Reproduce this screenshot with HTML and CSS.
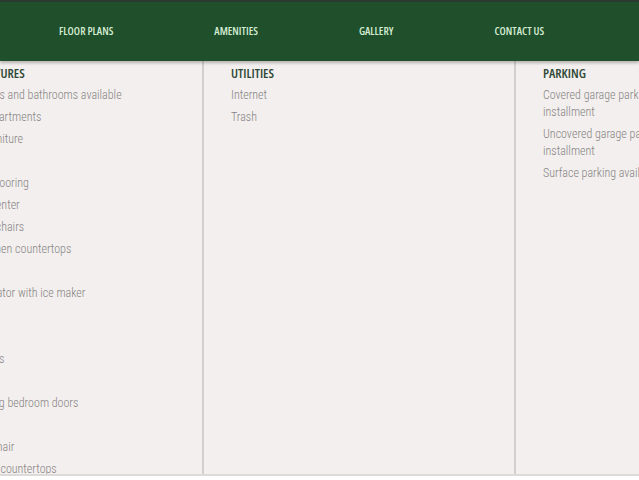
FILE: index.html
```html
<!DOCTYPE html>
<html>
<head>
<meta charset="utf-8">
<link rel="stylesheet" href="styles.css">
</head>
<body>
<header class="topbar">
  <nav class="nav">
    <a class="nav-link">FLOOR PLANS</a>
    <a class="nav-link">AMENITIES</a>
    <a class="nav-link">GALLERY</a>
    <a class="nav-link">CONTACT US</a>
  </nav>
</header>
<main class="panel">
  <section class="col">
    <h3 class="col-title">APARTMENT FEATURES</h3>
    <ul class="list">
      <li>Multiple bedrooms and bathrooms available</li>
      <li>All pet-friendly apartments</li>
      <li>All brand new furniture</li>
      <li>Balcony</li>
      <li>Hardwood-style flooring</li>
      <li>24-hour fitness center</li>
      <li>Dining table and chairs</li>
      <li>Solid granite kitchen countertops</li>
      <li>Dishwasher</li>
      <li>Stainless refrigerator with ice maker</li>
      <li>Microwave</li>
      <li>Ceiling fans</li>
      <li>Big walk-in closets</li>
      <li>Washer/Dryer</li>
      <li>Large glass sliding bedroom doors</li>
      <li>Study desk</li>
      <li>Computer desk chair</li>
      <li>Laminate kitchen countertops</li>
    </ul>
  </section>
  <section class="col">
    <h3 class="col-title">UTILITIES</h3>
    <ul class="list">
      <li>Internet</li>
      <li>Trash</li>
    </ul>
  </section>
  <section class="col col-wrap">
    <h3 class="col-title">PARKING</h3>
    <ul class="list">
      <li>Covered garage parking available for monthly installment</li>
      <li>Uncovered garage parking available for monthly installment</li>
      <li>Surface parking available</li>
    </ul>
  </section>
</main>
</body>
</html>
```
FILE: styles.css
```css
html, body {
  margin: 0;
  padding: 0;
  background: #ffffff;
  overflow: hidden;
}
body {
  width: 639px;
  height: 480px;
}
.topbar {
  height: 59px;
  background: #1f4f2b;
  border-top: 2px solid #2b3a30;
  box-shadow: 0 2px 3px rgba(0,0,0,0.25);
  position: relative;
  z-index: 2;
}
.nav {
  display: flex;
  align-items: center;
  gap: 101px;
  height: 100%;
  padding-left: 59px;
  padding-bottom: 2px;
  box-sizing: border-box;
}
.nav-link {
  color: #d4ecd2;
  font-family: "Open Sans", sans-serif;
  font-stretch: 75%;
  font-weight: 600;
  font-size: 11px;
  white-space: nowrap;
}
.panel {
  display: grid;
  grid-template-columns: 312px 312px 312px;
  margin-left: -108px;
  height: 413px;
  background: #f2efee;
  border-bottom: 2px solid #dddada;
  overflow: hidden;
}
.col {
  border-right: 2px solid #d2cfce;
  padding: 4px 30px 0 27px;
  box-sizing: border-box;
  height: 100%;
}
.col:first-child {
  padding-left: 26px;
}
.col-title {
  margin: 0 0 5px;
  color: #2e4836;
  font-family: "Open Sans", sans-serif;
  font-stretch: 75%;
  font-weight: 600;
  font-size: 13px;
  line-height: 17px;
  white-space: nowrap;
}
.list {
  list-style: none;
  margin: 0;
  padding: 0;
}
.list li {
  color: #878383;
  font-family: "Roboto Condensed", "Roboto", sans-serif;
  font-weight: 300;
  font-size: 12px;
  line-height: 17px;
  margin-bottom: 5px;
  white-space: nowrap;
}
.col-wrap .list li {
  white-space: normal;
}
```
